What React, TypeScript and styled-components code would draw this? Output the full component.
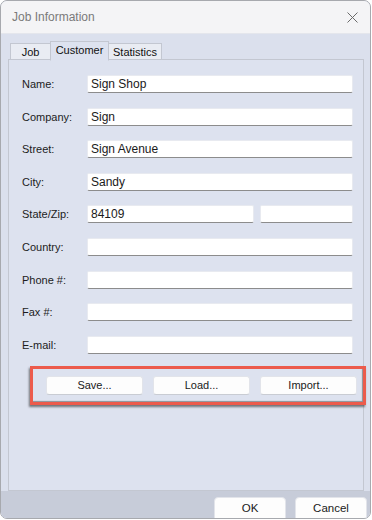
import React from 'react';
import styled, { createGlobalStyle } from 'styled-components';

const GlobalStyle = createGlobalStyle`
  html, body {
    margin: 0;
    padding: 0;
    background: #ffffff;
  }
  body {
    font-family: "Liberation Sans", Arial, sans-serif;
  }
`;

interface Field {
  label: string;
  value?: string;
  extra?: boolean;
}

const fields: Field[] = [
  { label: 'Name:', value: 'Sign Shop' },
  { label: 'Company:', value: 'Sign' },
  { label: 'Street:', value: 'Sign Avenue' },
  { label: 'City:', value: 'Sandy' },
  { label: 'State/Zip:', value: '84109', extra: true },
  { label: 'Country:' },
  { label: 'Phone #:' },
  { label: 'Fax #:' },
  { label: 'E-mail:' },
];

const tabs = [
  { name: 'Job', width: 41 },
  { name: 'Customer', width: 59 },
  { name: 'Statistics', width: 54 },
];

const App = () => {
  const [activeTab, setActiveTab] = React.useState<string>('Customer');

  return (
    <>
      <GlobalStyle />
      <Window>
        <TitleBar>
          <Title>Job Information</Title>
          <CloseButton aria-label="Close">
            <svg width="11" height="11" viewBox="0 0 11 11">
              <path d="M0.5 0.5 L10.5 10.5 M10.5 0.5 L0.5 10.5" stroke="#6a6a6a" strokeWidth="1" />
            </svg>
          </CloseButton>
        </TitleBar>

        <Body>
          <TabStrip>
            {tabs.map((tab) => (
              <Tab
                key={tab.name}
                tabWidth={tab.width}
                isActive={tab.name === activeTab}
                onClick={() => setActiveTab(tab.name)}
              >
                {tab.name}
              </Tab>
            ))}
          </TabStrip>

          <Panel>
            <FieldList>
              {fields.map((field) => (
                <Row key={field.label}>
                  <Label>{field.label}</Label>
                  <Input defaultValue={field.value ?? ''} />
                  {field.extra && <ZipInput defaultValue="" />}
                </Row>
              ))}
            </FieldList>

            <ButtonGroup>
              <GroupButton>Save...</GroupButton>
              <GroupButton>Load...</GroupButton>
              <GroupButton>Import...</GroupButton>
            </ButtonGroup>
          </Panel>

          <Footer>
            <DialogButton>OK</DialogButton>
            <DialogButton>Cancel</DialogButton>
          </Footer>
        </Body>
      </Window>
    </>
  );
};

const Window = styled.div`
  box-sizing: border-box;
  width: 371px;
  height: 519px;
  margin: 0;
  border: 1px solid #a7a9ae;
  border-radius: 7px;
  overflow: hidden;
  display: flex;
  flex-direction: column;
  background: #d8ddea;
`;

const TitleBar = styled.div`
  height: 32px;
  flex-shrink: 0;
  display: flex;
  align-items: center;
  justify-content: space-between;
  padding: 0 12px 0 11px;
  background: #f4f4f6;
  border-bottom: 1px solid #e4e6ec;
`;

const Title = styled.span`
  font-size: 12px;
  color: #7a7a7a;
`;

const CloseButton = styled.button`
  border: none;
  background: transparent;
  padding: 0;
  display: flex;
  cursor: pointer;
`;

const Body = styled.div`
  flex: 1;
  display: flex;
  flex-direction: column;
  padding-top: 7px;
  background: #dbe0ed;
`;

const TabStrip = styled.div`
  display: flex;
  align-items: flex-end;
  height: 18px;
  padding-left: 9px;
  position: relative;
  z-index: 1;
`;

const Tab = styled.button<{ isActive: boolean; tabWidth: number }>`
  box-sizing: border-box;
  width: ${(props) => props.tabWidth}px;
  font-family: "Liberation Sans", Arial, sans-serif;
  font-size: 11px;
  color: #111;
  border: 1px solid #c3c7d1;
  border-bottom: ${(props) => (props.isActive ? '1px solid #dde2ef' : 'none')};
  background: ${(props) => (props.isActive ? '#dde2ef' : '#e9ecf3')};
  height: ${(props) => (props.isActive ? '20px' : '16px')};
  margin-bottom: ${(props) => (props.isActive ? '-2px' : '0')};
  padding: 0 0 ${(props) => (props.isActive ? '3px' : '0')};
  white-space: nowrap;
  cursor: pointer;
  & + & {
    margin-left: -1px;
  }
`;

const Panel = styled.div`
  box-sizing: border-box;
  height: 432px;
  margin: 0 6px 0 7px;
  border: 1px solid #c3c7d1;
  background: #dde2ef;
  padding: 15px 10px 0 13px;
`;

const FieldList = styled.div`
  display: flex;
  flex-direction: column;
  gap: 14.6px;
`;

const Row = styled.div`
  display: flex;
  align-items: center;
  height: 18px;
`;

const Label = styled.span`
  width: 65px;
  flex-shrink: 0;
  font-size: 11px;
  color: #1c1c1c;
`;

const Input = styled.input`
  box-sizing: border-box;
  flex: 1;
  min-width: 0;
  height: 18px;
  border: 1px solid #e8eaf0;
  border-bottom: 1px solid #8c8c8c;
  border-radius: 2px;
  background: #ffffff;
  padding: 0 3px;
  font-family: "Liberation Sans", Arial, sans-serif;
  font-size: 12px;
  color: #1a1a1a;
  outline: none;
`;

const ZipInput = styled(Input)`
  flex: 0 0 93px;
  margin-left: 6px;
`;

const ButtonGroup = styled.div`
  box-sizing: border-box;
  display: flex;
  gap: 10px;
  height: 39px;
  margin: 12px -13px 0 8px;
  padding: 7px 6px 0 13px;
  border: 3px solid #ec5b4c;
  box-shadow: -1px 2px 2px rgba(40, 40, 40, 0.6), inset -1px -1px 1px rgba(40, 40, 40, 0.45);
`;

const GroupButton = styled.button`
  box-sizing: border-box;
  width: 97px;
  height: 19px;
  border: 1px solid #e2e4ea;
  border-bottom-color: #c9ccd3;
  border-radius: 3px;
  background: #fdfdfd;
  font-family: "Liberation Sans", Arial, sans-serif;
  font-size: 11px;
  color: #1a1a1a;
  padding: 0;
  cursor: pointer;
`;

const Footer = styled.div`
  flex: 1;
  display: flex;
  justify-content: flex-end;
  align-items: flex-start;
  gap: 9px;
  padding: 6px 3px 0 0;
  background: #c7ccd9;
`;

const DialogButton = styled.button`
  box-sizing: border-box;
  width: 72px;
  height: 26px;
  border: 1px solid #e2e4ea;
  border-radius: 4px;
  background: #fdfdfd;
  font-family: "Liberation Sans", Arial, sans-serif;
  font-size: 11.5px;
  color: #1a1a1a;
  padding: 0 0 4px;
  cursor: pointer;
`;

export default App;
